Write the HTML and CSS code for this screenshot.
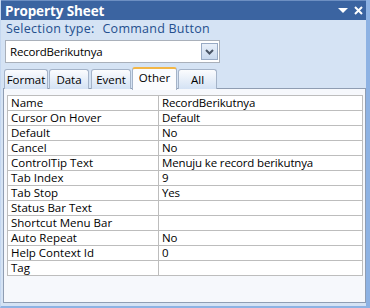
FILE: index.html
```html
<!DOCTYPE html>
<html>
<head>
<meta charset="utf-8">
<link rel="stylesheet" href="styles.css">
</head>
<body>
<div class="window">
  <div class="titlebar">
    <span class="title">Property Sheet</span>
    <span class="title-icons">
      <svg width="10" height="6" viewBox="0 0 10 6"><polygon points="0,0 10,0 5,5" fill="#fff"/></svg>
      <svg width="9" height="9" viewBox="0 0 9 9"><path d="M1 1 L8 8 M8 1 L1 8" stroke="#fff" stroke-width="2"/></svg>
    </span>
  </div>
  <div class="selection"><span class="sel-label">Selection type:</span><span>Command Button</span></div>
  <div class="combo">
    <span class="combo-text">RecordBerikutnya</span>
    <span class="combo-btn"><svg width="9" height="6" viewBox="0 0 9 6"><path d="M1 1 L4.5 4.5 L8 1" stroke="#4a5566" stroke-width="2" fill="none"/></svg></span>
  </div>
  <div class="tabs">
    <div class="tab tab-format">Format</div>
    <div class="tab tab-data">Data</div>
    <div class="tab tab-event">Event</div>
    <div class="tab tab-other active">Other</div>
    <div class="tab tab-all">All</div>
  </div>
  <div class="panel">
    <div class="grid">
      <div class="cell label">Name</div><div class="cell value">RecordBerikutnya</div>
      <div class="cell label">Cursor On Hover</div><div class="cell value">Default</div>
      <div class="cell label">Default</div><div class="cell value">No</div>
      <div class="cell label">Cancel</div><div class="cell value">No</div>
      <div class="cell label">ControlTip Text</div><div class="cell value">Menuju ke record berikutnya</div>
      <div class="cell label">Tab Index</div><div class="cell value">9</div>
      <div class="cell label">Tab Stop</div><div class="cell value">Yes</div>
      <div class="cell label">Status Bar Text</div><div class="cell value"></div>
      <div class="cell label">Shortcut Menu Bar</div><div class="cell value"></div>
      <div class="cell label">Auto Repeat</div><div class="cell value">No</div>
      <div class="cell label">Help Context Id</div><div class="cell value">0</div>
      <div class="cell label">Tag</div><div class="cell value"></div>
    </div>
  </div>
</div>
</body>
</html>
```
FILE: styles.css
```css
* { box-sizing: border-box; }
html, body { margin: 0; padding: 0; }
body {
  font-family: "Open Sans", "Noto Sans", sans-serif;
  font-size: 11px;
  background: #d6e4f5;
}
.window {
  width: 370px;
  height: 308px;
  background: #d5e3f4;
  border-left: 1px solid #c4d7f0;
  border-right: 4px solid #8db2e3;
  border-bottom: 2px solid #8db2e3;
  display: flex;
  flex-direction: column;
  overflow: hidden;
}
.titlebar {
  height: 20px;
  background: #3b64a1;
  border-top: 1px solid #6d8fc2;
  color: #fff;
  display: flex;
  align-items: center;
  justify-content: space-between;
  padding: 0 4px 0 4px;
  margin-right: -1px;
}
.title {
  font-weight: bold;
  font-size: 13.5px;
  letter-spacing: -0.1px;
}
.title-icons {
  display: flex;
  align-items: center;
  gap: 6px;
}
.title-icons svg { display: block; }
.selection {
  height: 18px;
  line-height: 17px;
  color: #244f8e;
  padding-left: 5px;
  font-size: 12.5px;
  letter-spacing: 0.25px;
  display: flex;
  gap: 8px;
}
.combo {
  margin: 2px 0 0 4px;
  width: 215px;
  height: 23px;
  background: #fff;
  border: 1px solid #a9b0ba;
  display: flex;
  align-items: center;
  justify-content: space-between;
  padding: 0 1px 0 4px;
}
.combo-text { color: #000; font-size: 11.5px; letter-spacing: -0.2px; }
.combo-btn {
  width: 17px;
  height: 17px;
  border: 1px solid #98aac4;
  background: linear-gradient(#e8eff9, #c9d9ee);
  display: flex;
  align-items: center;
  justify-content: center;
}
.combo-btn svg { display: block; }
.tabs {
  margin-top: 4px;
  padding-left: 3px;
  height: 22px;
  display: flex;
  align-items: flex-end;
  gap: 1px;
  position: relative;
  z-index: 1;
}
.tab {
  height: 20px;
  border: 1px solid #a4b3c8;
  border-bottom: none;
  border-radius: 3px 3px 0 0;
  background: linear-gradient(#fbfcfe, #d4e2f4);
  text-align: center;
  line-height: 20px;
  font-size: 11.5px;
  color: #000;
}
.tab-format { width: 44px; }
.tab-data { width: 40px; }
.tab-event { width: 40px; margin-left: 1px; }
.tab-other { width: 45px; }
.tab-all { width: 39px; }
.tab.active {
  border-top: 2px solid #f2b646;
  background: #fbfcfe;
  line-height: 18px;
  margin-bottom: -1px;
  height: 23px;
}
.panel {
  margin-left: 2px;
  width: 363px;
  height: 215px;
  margin-top: -1px;
  background: #f6f8fc;
  border: 1px solid #8f9db2;
  padding: 6px 0 0 3px;
}
.grid {
  width: 356px;
  display: grid;
  grid-template-columns: 151px 1fr;
  border-top: 1px solid #bdbdbd;
  border-left: 1px solid #bdbdbd;
  background: #fff;
}
.cell {
  height: 15px;
  line-height: 14px;
  border-right: 1px solid #bdbdbd;
  border-bottom: 1px solid #bdbdbd;
  padding-left: 3px;
  color: #000;
  white-space: nowrap;
  font-size: 11.5px;
}
.value { letter-spacing: -0.15px; }
```
